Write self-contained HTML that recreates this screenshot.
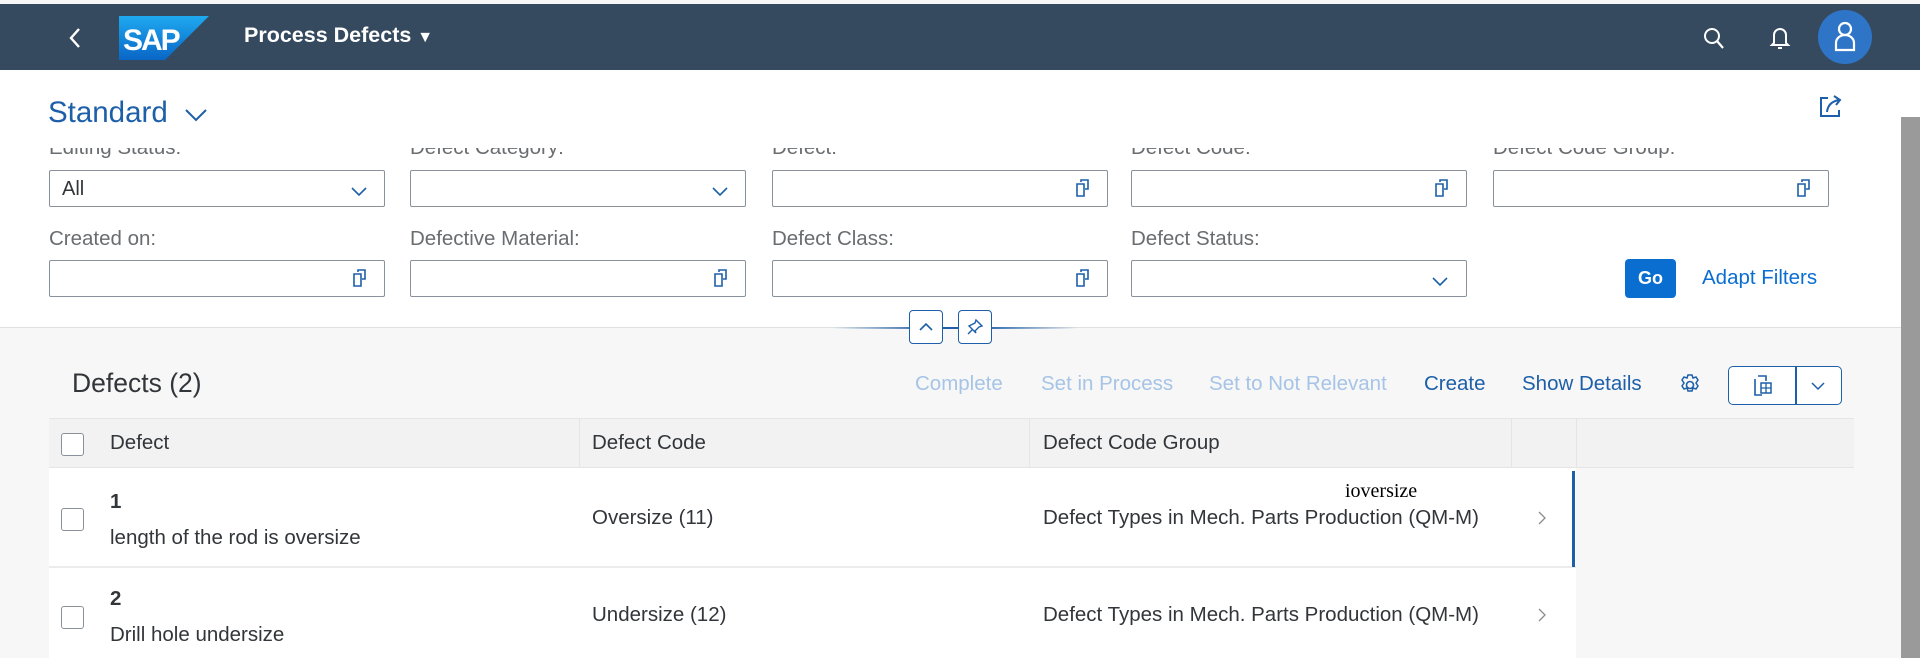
<!DOCTYPE html>
<html><head><meta charset="utf-8"><style>
*{box-sizing:border-box;margin:0;padding:0}
body{width:1920px;height:658px;overflow:hidden;background:#f7f7f7;font-family:"Liberation Sans",Arial,sans-serif;position:relative;color:#32363a}
.abs{position:absolute}
.hdr{left:0;top:4px;width:1920px;height:66px;background:#354a5f}
.fb{left:0;top:70px;width:1920px;height:258px;background:#fff;border-bottom:1px solid #e0e0e0}
.inp{position:absolute;height:37px;width:336px;border:1px solid #89919a;border-radius:2px;background:#fff}
.lbl{position:absolute;font-size:20.5px;color:#6a6d70}
.tb{position:absolute;top:372px;font-size:20.5px}
.th{position:absolute;top:431px;font-size:20.5px;color:#32363a}
.cb{position:absolute;width:23px;height:23px;border:1px solid #89919a;border-radius:3px;background:#fff}
.cell{position:absolute;font-size:20.5px;color:#32363a}
</style></head><body>
<div class="abs hdr"></div>
<svg class="abs" style="left:66px;top:26px" width="18" height="24"><path d="M13 3 L5 12 L13 21" stroke="#fff" stroke-width="2.4" fill="none"/></svg>
<svg class="abs" style="left:119px;top:16px" width="90" height="44"><defs><linearGradient id="g" x1="0" y1="0" x2="0" y2="1"><stop offset="0" stop-color="#1ea9f0"/><stop offset="1" stop-color="#0a66c6"/></linearGradient></defs><path d="M0 0 H90 L46 44 H0 Z" fill="url(#g)"/><text x="4" y="34" font-family="Liberation Sans" font-weight="bold" font-size="30" fill="#fff" letter-spacing="-2">SAP</text></svg>
<div class="abs" style="left:244px;top:23px;font-size:21.5px;font-weight:bold;color:#fff">Process Defects <span style="font-size:16px">▼</span></div>
<svg class="abs" style="left:1702px;top:26px" width="24" height="26"><circle cx="10" cy="10" r="7" stroke="#fff" stroke-width="2" fill="none"/><path d="M15 15 L21 22" stroke="#fff" stroke-width="2.2"/></svg>
<svg class="abs" style="left:1768px;top:24px" width="24" height="28"><path d="M6 19 V11 a6 6 0 0 1 12 0 V19 L20 21 H4 Z" stroke="#fff" stroke-width="2" fill="none"/><path d="M10 24 h4" stroke="#fff" stroke-width="2"/></svg>
<div class="abs" style="left:1818px;top:10px;width:54px;height:54px;border-radius:50%;background:#2f75c7"></div>
<svg class="abs" style="left:1833px;top:20px" width="24" height="34"><circle cx="12" cy="9" r="6" stroke="#fff" stroke-width="2.2" fill="none"/><path d="M3 30 V23 a9 8 0 0 1 18 0 V30 Z" stroke="#fff" stroke-width="2.2" fill="none"/></svg>
<div class="abs fb"></div>
<div class="abs" style="left:48px;top:96px;font-size:29.5px;color:#1d5fa8">Standard</div>
<svg class="abs" style="left:183px;top:106px" width="26" height="18"><path d="M3 4 L13 14 L23 4" stroke="#1d5fa8" stroke-width="2" fill="none"/></svg>
<svg class="abs" style="left:1818px;top:94px" width="26" height="26"><path d="M10 4 H3 V22 H21 V16" stroke="#1d5fa8" stroke-width="2" fill="none"/><path d="M9 18 Q10 8 21 6 M16 2 L22 6 L18 11" stroke="#1d5fa8" stroke-width="2" fill="none"/></svg>
<div class="abs" style="left:0;top:148px;width:1900px;height:14px;overflow:hidden">
<div class="lbl" style="left:49px;top:-12px">Editing Status:</div><div class="lbl" style="left:410px;top:-12px">Defect Category:</div><div class="lbl" style="left:772px;top:-12px">Defect:</div><div class="lbl" style="left:1131px;top:-12px">Defect Code:</div><div class="lbl" style="left:1493px;top:-12px">Defect Code Group:</div></div>
<div class="inp" style="left:49px;top:170px"><span style="position:absolute;left:12px;top:7px;font-size:20px">All</span></div>
<div class="inp" style="left:410px;top:170px"></div>
<div class="inp" style="left:772px;top:170px"></div>
<div class="inp" style="left:1131px;top:170px"></div>
<div class="inp" style="left:1493px;top:170px"></div>
<div class="lbl" style="left:49px;top:227px">Created on:</div><div class="lbl" style="left:410px;top:227px">Defective Material:</div><div class="lbl" style="left:772px;top:227px">Defect Class:</div><div class="lbl" style="left:1131px;top:227px">Defect Status:</div>
<div class="inp" style="left:49px;top:260px"></div>
<div class="inp" style="left:410px;top:260px"></div>
<div class="inp" style="left:772px;top:260px"></div>
<div class="inp" style="left:1131px;top:260px"></div>
<svg width="0" height="0" style="position:absolute"><defs><g id="vh"><path d="M6 4 V2 H13 V11 H10 M2 6 H9 V18 H2 Z" stroke="#1d5fa8" stroke-width="1.6" fill="none"/></g><g id="dd"><path d="M2 5 L9 12 L16 5" stroke="#1d5fa8" stroke-width="1.6" fill="none"/></g></defs></svg>
<svg class="abs" style="left:350px;top:183px" width="18" height="14"><use href="#dd"/></svg>
<svg class="abs" style="left:711px;top:183px" width="18" height="14"><use href="#dd"/></svg>
<svg class="abs" style="left:1431px;top:273px" width="18" height="14"><use href="#dd"/></svg>
<svg class="abs" style="left:1075px;top:178px" width="16" height="20"><use href="#vh"/></svg>
<svg class="abs" style="left:1434px;top:178px" width="16" height="20"><use href="#vh"/></svg>
<svg class="abs" style="left:1796px;top:178px" width="16" height="20"><use href="#vh"/></svg>
<svg class="abs" style="left:352px;top:268px" width="16" height="20"><use href="#vh"/></svg>
<svg class="abs" style="left:713px;top:268px" width="16" height="20"><use href="#vh"/></svg>
<svg class="abs" style="left:1075px;top:268px" width="16" height="20"><use href="#vh"/></svg>
<div class="abs" style="left:1625px;top:259px;width:51px;height:39px;background:#0a6ed1;border-radius:4px;color:#fff;font-weight:bold;font-size:18px;text-align:center;line-height:39px">Go</div>
<div class="abs" style="left:1702px;top:266px;font-size:20.5px;color:#0a6ed1">Adapt Filters</div>
<div class="abs" style="left:833px;top:327px;width:245px;height:2px;background:linear-gradient(90deg,rgba(29,95,168,0),#1d5fa8 40%,#1d5fa8 60%,rgba(29,95,168,0))"></div>
<div class="abs" style="left:909px;top:310px;width:34px;height:34px;border:1px solid #1d5fa8;border-radius:4px;background:#fff"></div>
<svg class="abs" style="left:917px;top:318px" width="18" height="18"><path d="M3 12 L9 6 L15 12" stroke="#1d5fa8" stroke-width="1.6" fill="none"/></svg>
<div class="abs" style="left:958px;top:310px;width:34px;height:34px;border:1px solid #1d5fa8;border-radius:4px;background:#fff"></div>
<svg class="abs" style="left:965px;top:317px" width="20" height="20"><path d="M11 3 L17 9 L14 10 L10 14 L11 16 L4 9 L6 8 L10 6 Z M7 13 L3 17" stroke="#1d5fa8" stroke-width="1.4" fill="none"/></svg>
<div class="abs" style="left:1901px;top:117px;width:19px;height:541px;background:#9a9a9a"></div>
<div class="abs" style="left:72px;top:368px;font-size:26.5px;color:#32363a">Defects (2)</div>
<div class="tb" style="left:915px;color:#a6c4e6">Complete</div>
<div class="tb" style="left:1041px;color:#a6c4e6">Set in Process</div>
<div class="tb" style="left:1209px;color:#a6c4e6">Set to Not Relevant</div>
<div class="tb" style="left:1424px;color:#1d5fa8">Create</div>
<div class="tb" style="left:1522px;color:#1d5fa8">Show Details</div>
<svg class="abs" style="left:1678px;top:373px" width="24" height="24"><circle cx="12" cy="12" r="3.5" stroke="#1d5fa8" stroke-width="1.6" fill="none"/><path d="M10 2 h4 l1 3 l3 -1 l2 3 l-2 3 l2 3 l-2 3 l-3 -1 l-1 3 h-4 l-1 -3 l-3 1 l-2 -3 l2 -3 l-2 -3 l2 -3 l3 1 Z" stroke="#1d5fa8" stroke-width="1.5" fill="none"/></svg>
<div class="abs" style="left:1728px;top:366px;width:114px;height:39px;border:1.5px solid #1d5fa8;border-radius:5px;background:#fff"></div>
<div class="abs" style="left:1795px;top:367px;width:1.5px;height:37px;background:#1d5fa8"></div>
<svg class="abs" style="left:1750px;top:373px" width="24" height="26"><path d="M8 3 H16 V8 M5 6 V22 H12" stroke="#1d5fa8" stroke-width="1.6" fill="none"/><rect x="11" y="10" width="10" height="10" stroke="#1d5fa8" stroke-width="1.5" fill="none"/><path d="M11 15 H21 M16 10 V20" stroke="#1d5fa8" stroke-width="1.3"/></svg>
<svg class="abs" style="left:1810px;top:380px" width="16" height="12"><path d="M2 3 L8 9 L14 3" stroke="#1d5fa8" stroke-width="1.5" fill="none"/></svg>
<div class="abs" style="left:49px;top:418px;width:1805px;height:50px;background:#f2f2f2;border-top:1px solid #e5e5e5;border-bottom:1px solid #e5e5e5"></div>
<div class="abs" style="left:579px;top:419px;width:1px;height:48px;background:#e5e5e5"></div>
<div class="abs" style="left:1029px;top:419px;width:1px;height:48px;background:#e5e5e5"></div>
<div class="abs" style="left:1511px;top:419px;width:1px;height:48px;background:#e5e5e5"></div>
<div class="abs" style="left:1576px;top:419px;width:1px;height:48px;background:#e5e5e5"></div>
<div class="cb" style="left:61px;top:433px"></div>
<div class="th" style="left:110px">Defect</div>
<div class="th" style="left:592px">Defect Code</div>
<div class="th" style="left:1043px">Defect Code Group</div>
<div class="abs" style="left:49px;top:468px;width:1527px;height:190px;background:#fff"></div>
<div class="abs" style="left:49px;top:566px;width:1527px;height:2px;background:#ececec"></div>
<div class="abs" style="left:1572px;top:471px;width:3px;height:96px;background:#1d5fa8"></div>
<div class="cb" style="left:61px;top:508px"></div>
<div class="cell" style="left:110px;top:490px;font-weight:bold">1</div>
<div class="cell" style="left:110px;top:526px">length of the rod is oversize</div>
<div class="cell" style="left:592px;top:506px">Oversize (11)</div>
<div class="cell" style="left:1043px;top:506px">Defect Types in Mech. Parts Production (QM-M)</div>
<div class="abs" style="left:1345px;top:480px;font-family:'Liberation Serif',serif;font-size:20px;color:#000">ioversize</div>
<div class="cb" style="left:61px;top:606px"></div>
<div class="cell" style="left:110px;top:587px;font-weight:bold">2</div>
<div class="cell" style="left:110px;top:623px">Drill hole undersize</div>
<div class="cell" style="left:592px;top:603px">Undersize (12)</div>
<div class="cell" style="left:1043px;top:603px">Defect Types in Mech. Parts Production (QM-M)</div>
<svg class="abs" style="left:1536px;top:508px" width="12" height="20"><path d="M3 4 L9 10 L3 16" stroke="#8c8c8c" stroke-width="1.3" fill="none"/></svg>
<svg class="abs" style="left:1536px;top:605px" width="12" height="20"><path d="M3 4 L9 10 L3 16" stroke="#8c8c8c" stroke-width="1.3" fill="none"/></svg>
</body></html>
